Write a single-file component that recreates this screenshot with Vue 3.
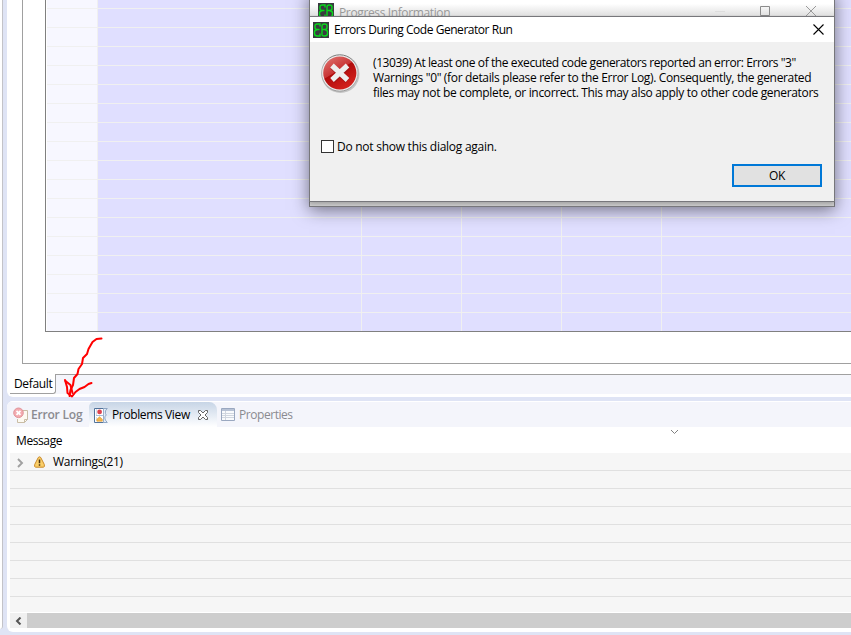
<template>
  <div class="workbench">
    <div class="side-strip"></div>
    <div class="column">
      <section class="editor">
        <div class="outer-frame">
          <div class="sheet">
            <div class="sheet-row" v-for="n in 18" :key="n">
              <span class="cell head"></span>
              <span class="cell wide"></span>
              <span class="cell" v-for="c in 3" :key="c"></span>
              <span class="cell rest"></span>
            </div>
          </div>
        </div>
        <div class="editor-tabs">
          <div class="editor-tab">Default</div>
          <div class="editor-tabs-fill"></div>
        </div>
      </section>

      <section class="views">
        <div class="view-tabs">
          <div class="view-tab log">
            <svg width="16" height="16" viewBox="0 0 16 16">
              <path d="M8 3.5h6.5v9l-3 3H4.5V12" fill="#fdfaf2" stroke="#c9bda6" />
              <path d="M14.5 12.5h-3v3" fill="none" stroke="#c9bda6" />
              <circle cx="5.5" cy="5.8" r="4.8" fill="#f3abb0" stroke="#df9399" />
              <path d="M3.5 3.8l4 4M7.5 3.8l-4 4" stroke="#fff" stroke-width="1.7" />
            </svg>
            <span>Error Log</span>
          </div>
          <div class="view-tab active">
            <svg width="14" height="16" viewBox="0 0 14 16">
              <path d="M.5 1.5h9v14h-9z" fill="#fff" stroke="#52739b" />
              <path d="M2 8.5h7M2 3h1M2 5h1M2 7h1M2 11h1M2 13h1" stroke="#a9bdd6" />
              <circle cx="5.6" cy="4.9" r="2.4" fill="#dd4450" />
              <path d="M5.6 9.8l2.7 2.4v2H2.900v-2z" fill="#f5b74a" stroke="#d9952f" stroke-width=".6" />
              <path d="M9.5 1.5h3.8q-2 1.5-2 3.5t1 3q-1.5 1-1.5 3t2.5 4.5H9.5" fill="#e4edf8" stroke="#8fa6c4" />
            </svg>
            <span>Problems View</span>
            <svg class="tab-close" width="12" height="12" viewBox="0 0 12 12">
              <path d="M1.500 1.500h2L6 4l2.500-2.500h2v2L8 6l2.500 2.500v2h-2L6 8l-2.500 2.500h-2v-2L4 6 1.500 3.500z" fill="#fff" stroke="#555" stroke-width=".9" />
            </svg>
          </div>
          <div class="view-tab props">
            <svg width="14" height="13" viewBox="0 0 14 13">
              <path d="M.5.5h13v12H.5z" fill="#f9fbfd" stroke="#9aa8c0" />
              <path d="M1 2h12" stroke="#b7c2d5" stroke-width="2" />
              <path d="M4.500 3v9M1 5.500h12M1 7.500h12M1 9.500h12" stroke="#d0d6df" />
            </svg>
            <span>Properties</span>
          </div>
        </div>
        <div class="table-head">
          <span>Message</span>
          <svg class="sort" width="9" height="6" viewBox="0 0 9 6">
            <path d="M1 1l3.500 3.500L8 1" fill="none" stroke="#808080" />
          </svg>
        </div>
        <div class="table-body">
          <div class="table-row" v-for="(row, i) in rows" :key="i">
            <template v-if="row">
              <svg class="expander" width="7" height="10" viewBox="0 0 7 10">
                <path d="M1 1l4 4-4 4" fill="none" stroke="#a0a0a0" stroke-width="1.900" />
              </svg>
              <svg class="warn" width="11" height="12" viewBox="0 0 11 12">
                <path d="M5.500.8Q6.500.8 7 2l3.300 6.500Q11 11.200 9.300 11.200H1.700Q0 11.200.7 8.500L4 2Q4.500.8 5.500.8z" fill="#fbcf68" stroke="#c98a2c" />
                <path d="M5.500 3.500v3.800M5.500 8.300v1.500" stroke="#4a3210" stroke-width="1.500" />
              </svg>
              <span>{{ row }}</span>
            </template>
          </div>
        </div>
        <div class="scrollbar">
          <div class="scroll-btn">
            <svg width="7" height="8" viewBox="0 0 7 8">
              <path d="M5.500.5L2 4l3.500 3.500" fill="none" stroke="#555" stroke-width="2" />
            </svg>
          </div>
          <div class="scroll-thumb"></div>
        </div>
      </section>
    </div>

    <svg class="scribble" width="50" height="66" viewBox="0 0 50 66">
      <path d="M41.500 3.500l-5 .5-4 3-4 7-1.500 5-4 4-1 6-3.500 5-1 5-3.500 4-1 7-2.500 5-1 6" />
      <path d="M5 45l2 7 .5 6 4.500 3.500 3.500-4.500 4-3 5-2 4-3 3-1" />
      <path d="M5.500 46l5 4 2 8" />
    </svg>

    <div class="progress-dialog">
      <div class="progress-title">
        <svg class="eb" width="16" height="16" viewBox="0 0 16 16">
          <path d="M0 0h16v16H0z" fill="#3a3a40" />
          <path :d="logoPath" fill="none" stroke="#08d81b" stroke-width="1.400" />
        </svg>
        <span class="title-text">Progress Information</span>
        <svg class="win-controls" width="102" height="12" viewBox="0 0 102 12">
          <path d="M0 6.500h10" stroke="#ddd" />
          <path d="M45.500 1.500h9v9h-9z" fill="none" stroke="#8c8c8c" />
          <path d="M91 1l10 10M101 1L91 11" stroke="#999" />
        </svg>
      </div>
    </div>

    <div class="error-dialog">
      <div class="dialog-title">
        <svg class="eb" width="16" height="16" viewBox="0 0 16 16">
          <path d="M0 0h16v16H0z" fill="#3a3a40" />
          <path :d="logoPath" fill="none" stroke="#08d81b" stroke-width="1.400" />
        </svg>
        <span class="title-text">Errors During Code Generator Run</span>
        <svg class="close" width="11" height="11" viewBox="0 0 11 11">
          <path d="M.5.5l10 10M10.500.5l-10 10" stroke="#000" stroke-width="1.100" />
        </svg>
      </div>
      <div class="dialog-body">
        <div class="message">
          <svg width="40" height="40" viewBox="0 0 40 40">
            <defs>
              <linearGradient id="red" x1="0" y1="0" x2=".6" y2="1">
                <stop offset="0" stop-color="#e27a76" />
                <stop offset=".5" stop-color="#c93434" />
                <stop offset=".52" stop-color="#b00c0c" />
                <stop offset="1" stop-color="#d3201c" />
              </linearGradient>
              <linearGradient id="ring" x1="0" y1="0" x2="0" y2="1">
                <stop offset="0" stop-color="#777" />
                <stop offset=".4" stop-color="#bbb" />
                <stop offset="1" stop-color="#999" />
              </linearGradient>
            </defs>
            <circle cx="19.500" cy="20" r="19" fill="#c4c4c4" />
            <circle cx="18.800" cy="19" r="18.200" fill="#ececec" stroke="url(#ring)" />
            <circle cx="18.800" cy="19" r="16.600" fill="url(#red)" />
            <path d="M11.500 12.500l15 14M26.500 12.500l-15 14" stroke="#8c1010" stroke-width="6" opacity=".5" />
            <path d="M11 11.500l15.500 14.500M26.500 11.500L11 26" stroke="#eee" stroke-width="5.200" />
          </svg>
          <div class="lines">
            <div class="l1">(13039) At least one of the executed code generators reported an error: Errors "3"</div>
            <div class="l2">Warnings "0" (for details please refer to the Error Log). Consequently, the generated</div>
            <div class="l3">files may not be complete, or incorrect. This may also apply to other code generators</div>
          </div>
        </div>
        <div class="check-row" @click="hideNext = !hideNext">
          <span class="box"><i v-if="hideNext">✓</i></span>
          <span class="check-label">Do not show this dialog again.</span>
        </div>
        <div class="buttons">
          <button class="ok">OK</button>
        </div>
      </div>
    </div>
  </div>
</template>

<script setup>
import { ref } from 'vue';

const rows = ref(['Warnings(21)', '', '', '', '', '', '', '', '']);
const hideNext = ref(false);

// the two mirrored letters of the EB logo
const logoPath = 'M7 4.500V2H4.500Q2 2 2 4v1.500Q2 7.500 4.500 7.500H6.500M4.500 7.500Q1.500 8 1.500 10v1.500Q1.500 14 4.500 14H7V11.500M9 7.500V4Q9 2 11.500 2T14 4v1.500Q14 7.500 11.500 7.500H8.500M11.500 7.500Q14.500 8 14.500 10v1.500Q14.500 14 11.500 14T9 12V7.500';
</script>

<style>
body { margin: 0; overflow: hidden; }
</style>

<style scoped>
.workbench { position: relative; display: flex; width: 851px; height: 635px; overflow: hidden; background: #dfe4f5; color: #000; font-family: "Open Sans", "Noto Sans", sans-serif; font-size: 12px; line-height: 15px; letter-spacing: -0.3px; white-space: nowrap; }
.workbench * { box-sizing: border-box; }
.side-strip { width: 3px; height: 629px; margin-right: 4px; background: #fff; border-right: 1px solid #c3c3c8; border-radius: 0 0 3px 0; }
.column { flex: 1; min-width: 0; display: flex; flex-direction: column; gap: 4px; }

.editor { height: 397px; background: #fff; border-radius: 0 0 0 6px; }
.outer-frame { height: 364px; margin-left: 15px; padding-left: 22px; border-left: 1px solid #a0a0a0; border-bottom: 1px solid #a0a0a0; }
.sheet { height: 332px; padding-left: 1px; overflow: hidden; border-left: 1px solid #808080; border-bottom: 1px solid #808080; }
.sheet-row { display: flex; height: 19px; }
.sheet-row:first-child { height: 9px; }
.cell { width: 100px; background: #e0dfff; border-right: 1px solid #f0f0f0; border-bottom: 1px solid #f0f0f0; }
.cell.head { width: 51px; background: #f7f7ff; }
.cell.wide { width: 264px; }
.cell.rest { flex: 1; border-right: none; }
.editor-tabs { display: flex; height: 20px; margin-top: 10px; }
.editor-tab { width: 46px; height: 20px; margin-left: 3px; padding: 2px 0 0 4px; background: #fff; border-right: 1px solid #a0a0a0; border-bottom: 1px solid #a0a0a0; border-radius: 0 0 3px 0; letter-spacing: -0.35px; }
.editor-tabs-fill { flex: 1; border-top: 1px solid #a0a0a0; background: #f4f5fb; }

.views { height: 231px; background: #fff; border-radius: 6px 0 0 6px; overflow: hidden; }
.view-tabs { display: flex; height: 26px; border-top: 1px solid #fff; background: #f4f5fb; }
.view-tab { display: flex; align-items: center; color: #8b8b90; }
.view-tab.log { width: 82px; padding-left: 6px; gap: 2px; font-weight: 600; letter-spacing: -0.2px; }
.view-tab.active { width: 128px; padding-left: 5px; gap: 4px; color: #000; background: linear-gradient(#c7d5e6, #f4f7fb 80%, #fff); border-radius: 5px 8px 0 0; letter-spacing: -0.37px; }
.tab-close { margin-left: 3px; }
.view-tab.props { padding-left: 4px; gap: 4px; letter-spacing: -0.45px; }
.table-head { position: relative; height: 26px; padding: 6px 9px; letter-spacing: -0.4px; }
.sort { position: absolute; left: 663px; top: 2px; }
.table-body { height: 159px; margin-left: 3px; background: #f6f6f6; overflow: hidden; }
.table-row { display: flex; align-items: center; height: 18px; border-bottom: 1px solid #e0e0e0; }
.expander { margin: 3px 8px 0 7px; }
.warn { margin: 0 8px 0 2px; }
.scrollbar { display: flex; height: 15px; margin: 1px 0 0 3px; }
.scroll-btn { display: flex; align-items: center; justify-content: center; width: 17px; background: #f0f0f0; }
.scroll-thumb { flex: 1; background: #cdcdcd; }

.scribble { position: absolute; left: 60px; top: 335px; fill: none; stroke: #f00; stroke-width: 2; stroke-linecap: round; stroke-linejoin: round; }

.progress-dialog { position: absolute; left: 309px; top: -8px; width: 526px; height: 215px; background: #d3d3d3; border: 1px solid #77777b; box-shadow: 0 3px 16px rgba(0, 0, 0, 0.5); }
.progress-title { display: flex; align-items: flex-start; height: 24px; padding: 10px 17px 0 8px; background: linear-gradient(#fff 45%, #dcdcdc); color: #999; }
.progress-title .title-text { margin: 2px 0 0 5px; letter-spacing: -0.37px; }
.win-controls { margin: 2px 0 0 auto; }

.error-dialog { position: absolute; left: 309px; top: 16px; width: 526px; height: 186px; background: #f0f0f0; border: 1px solid #77777b; box-shadow: 0 2px 5px rgba(0, 0, 0, 0.25); clip-path: inset(-1px 0 -4px 0); }
.dialog-title { display: flex; align-items: center; height: 25px; padding: 0 10px 0 3px; background: #fff; }
.dialog-title .title-text { margin: 0 0 1px 5px; letter-spacing: -0.46px; }
.close { margin-left: auto; }
.dialog-body { height: 159px; padding: 12px 12px 0 11px; }
.message { display: flex; gap: 12px; height: 84px; }
.lines { padding-top: 1px; }
.l1 { letter-spacing: -0.41px; }
.l2 { letter-spacing: -0.34px; }
.l3 { letter-spacing: -0.325px; }
.check-row { display: flex; align-items: center; gap: 3px; height: 17px; cursor: default; }
.check-label { letter-spacing: -0.26px; }
.box { width: 13px; height: 13px; background: #fff; border: 1px solid #333; line-height: 11px; }
.buttons { display: flex; justify-content: flex-end; padding-top: 9px; }
.ok { width: 90px; height: 23px; padding: 0; background: #e1e1e1; border: 2px solid #0078d7; font: inherit; letter-spacing: -0.3px; color: #000; }
</style>
